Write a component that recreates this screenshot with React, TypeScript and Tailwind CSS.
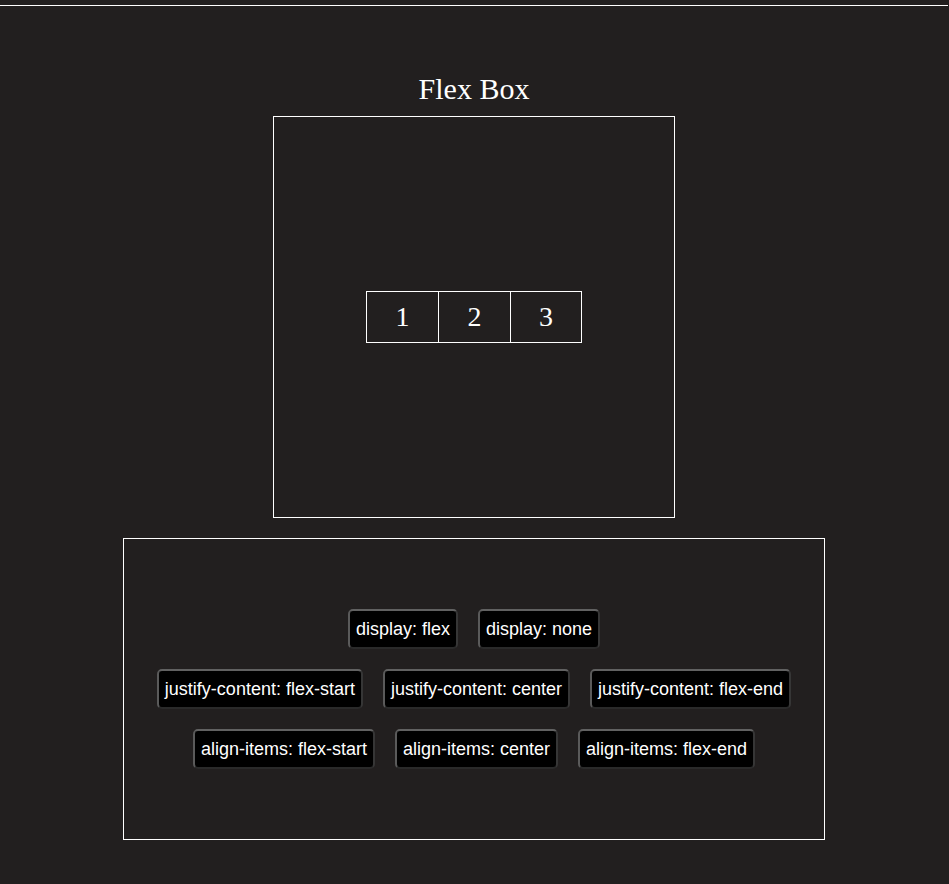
import React from "react";

const rows: string[][] = [
  ["display: flex", "display: none"],
  ["justify-content: flex-start", "justify-content: center", "justify-content: flex-end"],
  ["align-items: flex-start", "align-items: center", "align-items: flex-end"],
];

export default function App() {
  return (
    <div className="min-h-screen w-full bg-[#221f1f] text-white flex flex-col items-center overflow-hidden pr-[1px]">
      <div className="w-full h-px bg-white mt-[5px]" />
      <div
        className="mt-[66px] mb-[10px] text-[30px] leading-[34px]"
        style={{ fontFamily: '"Liberation Serif", serif' }}
      >
        Flex Box
      </div>
      <div className="w-[402px] h-[402px] border border-white flex items-center justify-center">
        {["1", "2", "3"].map((n, i) => (
          <div
            key={n}
            className={
              i === 2
                ? "w-[72px] h-[52px] border border-white flex items-center justify-center text-[28px]"
                : "w-[72px] h-[52px] border-y border-l border-white flex items-center justify-center text-[28px]"
            }
            style={{ fontFamily: '"Liberation Serif", serif' }}
          >
            {n}
          </div>
        ))}
      </div>
      <div className="mt-[20px] w-[702px] h-[302px] border border-white flex flex-col items-center justify-center">
        {rows.map((row, ri) => (
          <div key={ri} className="flex justify-center">
            {row.map((label) => (
              <button
                key={label}
                className="m-[10px] h-[40px] px-[6px] bg-black text-white text-[18px] leading-[21px] rounded-[5px] border-2 border-t-[#616161] border-l-[#5a5a5a] border-b-[#2a2a2a] border-r-[#363636] whitespace-nowrap"
                style={{ fontFamily: '"Liberation Sans", Arial, sans-serif' }}
              >
                {label}
              </button>
            ))}
          </div>
        ))}
      </div>
    </div>
  );
}
